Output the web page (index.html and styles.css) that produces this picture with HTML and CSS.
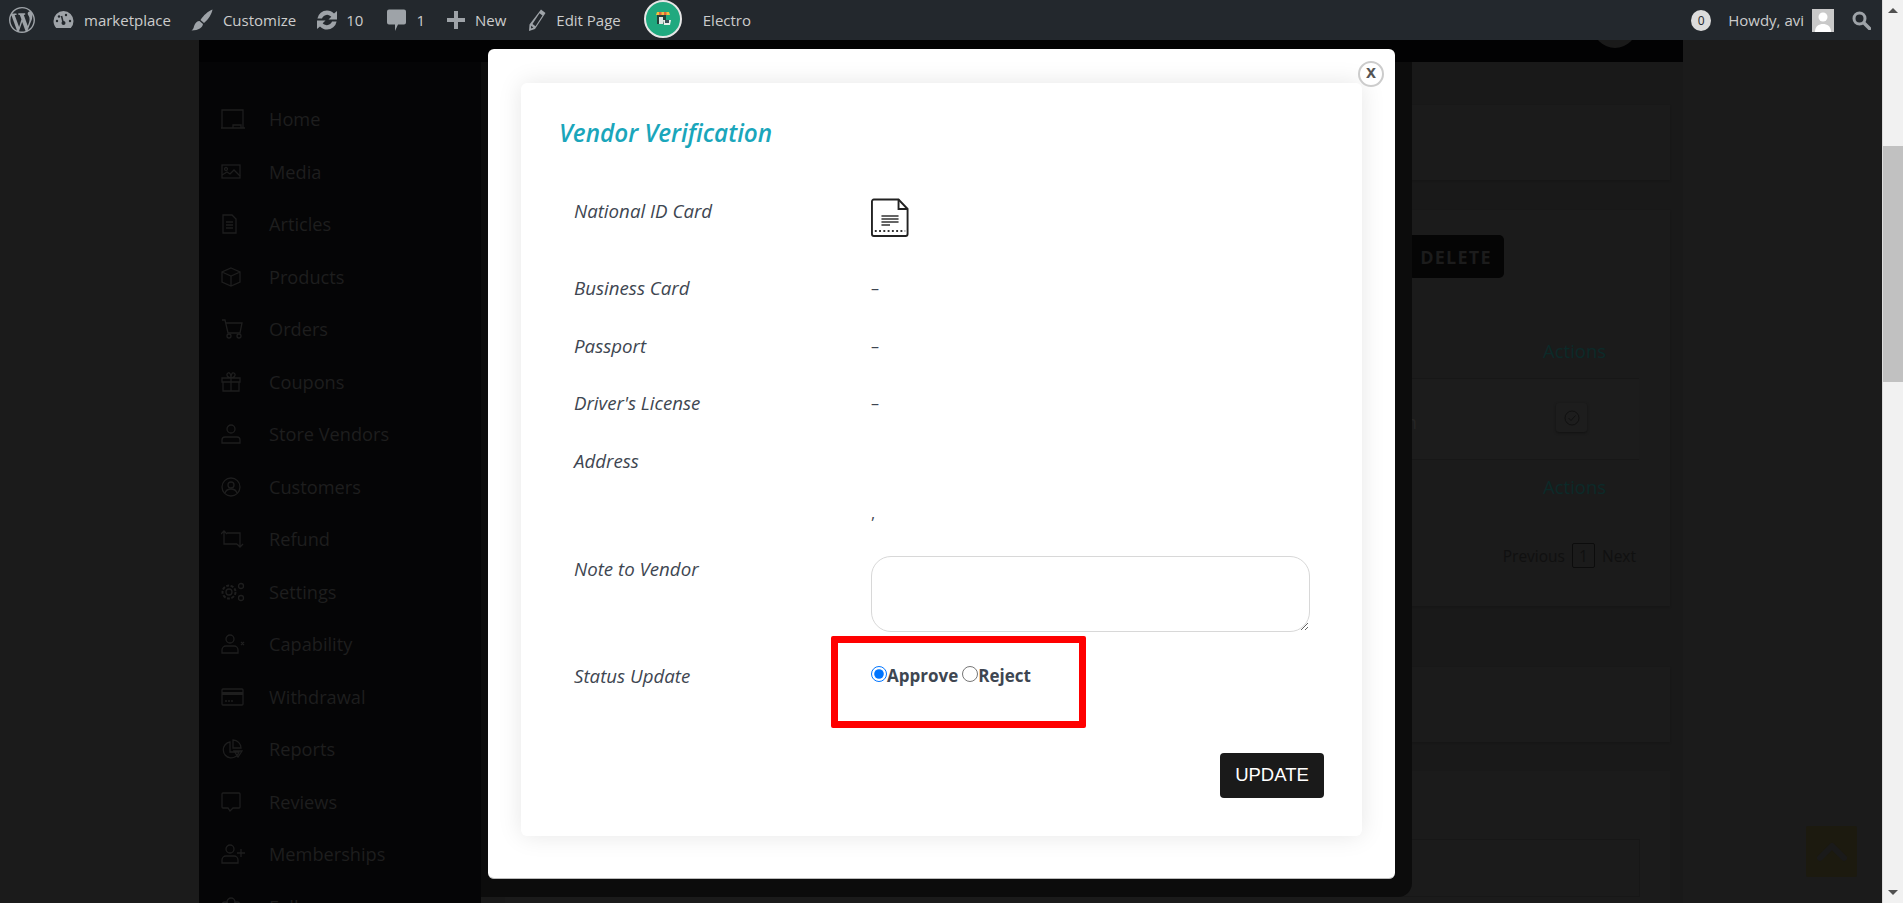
FILE: index.html
```html
<!DOCTYPE html>
<html lang="en">

<head>
    <meta charset="UTF-8">
    <meta name="viewport" content="width=device-width, initial-scale=1.0">
    <title>Vendor Verification</title>
    <link rel="stylesheet" href="styles.css">
</head>

<body>
    <div class="page">

        <div class="adminbar">
            <div class="ab-left">
                <svg class="ab-wp" viewBox="0 0 20 20"><path fill="#9ea3a8" d="M20 10c0-5.510-4.490-10-10-10C4.480 0 0 4.490 0 10c0 5.520 4.480 10 10 10 5.510 0 10-4.480 10-10zM7.780 15.370L4.370 6.220c.550-.020 1.170-.080 1.170-.080.500-.060.440-1.130-.060-1.110 0 0-1.450.110-2.370.110-.180 0-.370 0-.580-.010C4.120 2.690 6.890 1.050 10 1.050c2.330 0 4.450.870 6.030 2.340-.680-.110-1.650.390-1.650 1.580 0 .740.450 1.360.900 2.100.350.610.550 1.360.550 2.460 0 1.490-1.400 5-1.400 5l-3.030-8.370c.540-.020.820-.170.820-.170.500-.050.440-1.250-.060-1.220 0 0-1.440.120-2.380.120-.870 0-2.330-.120-2.330-.120-.500-.030-.560 1.200-.060 1.220l.920.080 1.260 3.410zM17.410 10c.240-.640.740-1.870.430-4.250.700 1.290 1.050 2.710 1.050 4.250 0 3.290-1.730 6.240-4.490 7.730 1-2.680 2-5.390 3.010-7.730zM6.100 18.090C3.120 16.640 1.110 13.530 1.110 10c0-1.300.230-2.480.720-3.590C3.250 10.300 4.670 14.200 6.100 18.090zm4.030-6.630l2.580 6.980c-.860.290-1.740.450-2.710.450-.790 0-1.570-.110-2.290-.330.810-2.380 1.620-4.740 2.420-7.100z"/></svg>
                <div class="ab-item ab-first">
                    <svg class="ab-icon" viewBox="0 0 21 22"><path d="M10.500 2a10 10 0 0 0-10 10c0 2.600 1 5 2.700 7h14.600a10 10 0 0 0 2.700-7 10 10 0 0 0-10-10z" fill="#9ea3a8"/><circle cx="10.500" cy="14" r="2" fill="#23282d"/><path d="M10.300 14 8.500 7" stroke="#23282d" stroke-width="1.500"/><circle cx="4" cy="12" r="1.200" fill="#23282d"/><circle cx="6" cy="7.500" r="1.200" fill="#23282d"/><circle cx="13" cy="6" r="1.200" fill="#23282d"/><circle cx="17" cy="12" r="1.200" fill="#23282d"/></svg>
                    <span>marketplace</span>
                </div>
                <div class="ab-item">
                    <svg class="ab-icon" viewBox="0 0 22 22"><path d="M21.500 .5c-.5 4-4 10-8.500 13.500l-3.500-3C12.500 6.500 17 2 21.500 .5zM8.500 12l3.500 3c-.5 3.500-4 6.500-11.500 6.500 2.500-1.500 2-3.500 3-5.500s2.500-4 5-4z" fill="#9ea3a8"/></svg>
                    <span>Customize</span>
                </div>
                <div class="ab-item ab-updates">
                    <svg class="ab-icon" viewBox="0 0 24 22"><path d="M12 1.500a9.500 9.500 0 0 1 7 3.100L22 2v8.500h-8.500l2.800-2.800A5.500 5.500 0 0 0 7 9.500H2.400A9.700 9.700 0 0 1 12 1.500zM2 20v-8.500h8.500l-2.800 2.800A5.500 5.500 0 0 0 17 12.500h4.600A9.700 9.700 0 0 1 12 20.500a9.500 9.500 0 0 1-7-3.100z" fill="#9ea3a8"/></svg>
                    <span>10</span>
                </div>
                <div class="ab-item ab-comments">
                    <svg class="ab-icon" viewBox="0 0 19 22"><path d="M2 .5h15a2 2 0 0 1 2 2v11a2 2 0 0 1-2 2h-6l-3 6.500v-6.500H2a2 2 0 0 1-2-2v-11a2 2 0 0 1 2-2z" fill="#9ea3a8"/></svg>
                    <span>1</span>
                </div>
                <div class="ab-item ab-wide">
                    <svg class="ab-icon" viewBox="0 -2 18 22"><path d="M7 0h4v7h7v4h-7v7H7v-7H0V7h7z" fill="#9ea3a8"/></svg>
                    <span>New</span>
                </div>
                <div class="ab-item ab-wide">
                    <svg class="ab-icon" viewBox="0 0 18 22"><path fill-rule="evenodd" d="M13 .5l4.500 3.500L7 20l-6 2 .5-6.500zM4.500 15l3 2.300L14.500 6.500l-3-2.300zM3.200 16.800l-.2 2.700 2.400-.9z" fill="#9ea3a8"/></svg>
                    <span>Edit Page</span>
                </div>
                <div class="ab-store">
                    <svg viewBox="0 0 24 24" class="store-icon"><path d="M5 8l1-3h12l1 3z" fill="#f0c040"/><path d="M8 5h2.500v3H8zM13 5h2.500v3H13z" fill="#e2673f"/><rect x="6" y="8" width="9" height="9" fill="#24423a"/><rect x="8" y="10" width="4" height="7" fill="#dfe6e2"/><path d="M12 13h8l-1 5h-6z" fill="#e8eeea"/><path d="M14 13h4v3h-4z" fill="#3b4a55"/></svg>
                </div>
                <div class="ab-item ab-electro"><span>Electro</span></div>
            </div>
            <div class="ab-right">
                <span class="ab-badge">0</span>
                <span class="ab-howdy">Howdy, avi</span>
                <svg class="ab-avatar" viewBox="0 0 22 23"><rect width="22" height="23" fill="#c9c9c9"/><circle cx="11" cy="8" r="4.500" fill="#fff"/><path d="M3 23c0-6 4-8 8-8s8 2 8 8z" fill="#fff"/></svg>
                <svg class="ab-search" viewBox="0 0 19 19"><circle cx="7.500" cy="7.500" r="5.500" fill="none" stroke="#9ea3a8" stroke-width="3"/><path d="M12 12l5.500 5.500" stroke="#9ea3a8" stroke-width="3.500" stroke-linecap="round"/></svg>
            </div>
        </div>

        <div class="dashboard">
            <div class="topbar">
                <div class="topbar-avatar"></div>
            </div>
            <div class="dash-body">
                <ul class="sidemenu">
                    <li class="side-item"><svg viewBox="0 0 24 20"><path d="M1 19V1h21v18M0 19h24M12 19v-3h8v3"/></svg>Home</li>
                    <li class="side-item"><svg viewBox="0 0 24 20"><rect x="1" y="3" width="18" height="13"/><circle cx="5" cy="7" r="1.500"/><path d="M1 13l5-3 3 2 4-4 6 6"/></svg>Media</li>
                    <li class="side-item"><svg viewBox="0 0 24 20"><path d="M2 1h9l4 4v14H2zM5 8h7M5 11h7M5 14h7"/></svg>Articles</li>
                    <li class="side-item"><svg viewBox="0 0 24 20"><path d="M10 1l9 4v10l-9 4-9-4V5zM1 5l9 4 9-4M10 9v10"/></svg>Products</li>
                    <li class="side-item"><svg viewBox="0 0 24 20"><path d="M1 1h3l3 13h12l2-10H5"/><circle cx="8" cy="17" r="2"/><circle cx="18" cy="17" r="2"/></svg>Orders</li>
                    <li class="side-item"><svg viewBox="0 0 24 20"><path d="M1 6h18v4H1zM2 10h16v9H2zM10 6v13M10 6C6 6 5 2 7 1s3 2 3 5c0-3 1-6 3-5s1 5-3 5"/></svg>Coupons</li>
                    <li class="side-item"><svg viewBox="0 0 24 20"><circle cx="10" cy="5" r="4"/><path d="M1 19v-3a3 3 0 0 1 3-3h12a3 3 0 0 1 3 3v3z"/></svg>Store Vendors</li>
                    <li class="side-item"><svg viewBox="0 0 24 20"><circle cx="10" cy="10" r="9"/><circle cx="10" cy="8" r="3"/><path d="M4 16c1-3 3-4 6-4s5 1 6 4"/></svg>Customers</li>
                    <li class="side-item"><svg viewBox="0 0 24 20"><path d="M0 5l3-3 3 3M3 2v13h13M6 4h13v14M16 15l3 3 3-3"/></svg>Refund</li>
                    <li class="side-item"><svg viewBox="0 0 24 20"><circle cx="8" cy="10" r="3"/><circle cx="8" cy="10" r="6.500" stroke-dasharray="3 1.500" stroke-width="2"/><circle cx="20" cy="4" r="2.500"/><circle cx="20" cy="16" r="2.500"/></svg>Settings</li>
                    <li class="side-item"><svg viewBox="0 0 24 20"><circle cx="9" cy="5" r="4"/><path d="M1 19v-3a4 4 0 0 1 4-4h8a4 4 0 0 1 4 4v3zM20 8l3 3M23 8l-3 3"/></svg>Capability</li>
                    <li class="side-item"><svg viewBox="0 0 24 20"><rect x="1" y="2" width="21" height="16" rx="1"/><path d="M1 6.500h21" stroke-width="3"/><path d="M4 14h9" stroke-dasharray="2 1"/></svg>Withdrawal</li>
                    <li class="side-item"><svg viewBox="0 0 24 20"><path d="M9 3a8 8 0 1 0 9 10H9zM12 1a8 8 0 0 1 8 8h-8zM13 12h8l-4 6z"/></svg>Reports</li>
                    <li class="side-item"><svg viewBox="0 0 24 20"><path d="M2 1h16a1 1 0 0 1 1 1v13a1 1 0 0 1-1 1H12l-3 3-2-3H2a1 1 0 0 1-1-1V2a1 1 0 0 1 1-1z"/></svg>Reviews</li>
                    <li class="side-item"><svg viewBox="0 0 24 20"><circle cx="9" cy="5" r="4"/><path d="M1 19v-3a4 4 0 0 1 4-4h8a4 4 0 0 1 4 4v3zM20 5v8M16 9h8"/></svg>Memberships</li>
                    <li class="side-item"><svg viewBox="0 0 24 20"><circle cx="10" cy="5" r="4"/><circle cx="4" cy="8" r="3"/><circle cx="16" cy="8" r="3"/></svg>Followers</li>
                </ul>

                <div class="content">
                    <div class="card card-head"></div>
                    <div class="card card-table">
                        <div class="toolbar">
                            <span class="delete-btn">DELETE</span>
                        </div>
                        <div class="table-row table-head"><span class="col-actions">Actions</span></div>
                        <div class="table-row table-body"><span class="col-text">am</span><span class="col-actions"><span class="check-btn"><svg viewBox="0 0 16 16"><circle cx="8" cy="8" r="7"/><path d="M4.500 8l2.500 2.500 4.500-5"/></svg></span></span></div>
                        <div class="table-row table-foot"><span class="col-actions">Actions</span></div>
                        <div class="pager">Previous <span class="pager-num">1</span> Next</div>
                    </div>
                    <div class="card card-empty"></div>
                    <div class="card card-last">
                        <div class="card-inner"></div>
                    </div>
                </div>
            </div>
        </div>

        <div class="back-top">
            <svg viewBox="0 0 30 20"><path d="M3 16 15 4l12 12" fill="none" stroke="#1a1a1a" stroke-width="6" stroke-linecap="round" stroke-linejoin="round"/></svg>
        </div>

        <div class="modal-backing"></div>
        <div class="modal">
            <span class="modal-close">x</span>
            <div class="modal-card">
                <h2 class="modal-title">Vendor Verification</h2>

                <div class="v-row v-row-first">
                    <div class="v-label">National ID Card</div>
                    <div class="v-value">
                        <svg class="file-icon" viewBox="0 0 40 40" preserveAspectRatio="none"><path d="M3 1.500h26l9.500 9.500v25a2 2 0 0 1-2 2H3a2 2 0 0 1-2-2V3.500a2 2 0 0 1 2-2z" fill="#fff" stroke="#222" stroke-width="2"/><path d="M29 1.500V11h9.500" fill="none" stroke="#222" stroke-width="2"/><path d="M11 18h18M11 21h18M11 24h18M11 27h9" stroke="#333" stroke-width="1.500"/><path d="M4 33h32" stroke="#333" stroke-width="2" stroke-dasharray="2 2.500"/></svg>
                    </div>
                </div>
                <div class="v-row"><div class="v-label">Business Card</div><div class="v-value">–</div></div>
                <div class="v-row"><div class="v-label">Passport</div><div class="v-value">–</div></div>
                <div class="v-row"><div class="v-label">Driver's License</div><div class="v-value">–</div></div>
                <div class="v-row v-row-address"><div class="v-label">Address</div></div>
                <div class="v-row v-row-comma"><div class="v-label"></div><div class="v-value">,</div></div>
                <div class="v-row v-row-note">
                    <div class="v-label">Note to Vendor</div>
                    <textarea class="v-note"></textarea>
                </div>
                <div class="v-row v-row-status">
                    <div class="v-label">Status Update</div>
                    <div class="v-radios">
                        <input type="radio" name="status" checked><span class="radio-text">Approve</span>
                        <input type="radio" name="status" class="radio-second"><span class="radio-text">Reject</span>
                    </div>
                </div>
                <div class="modal-actions">
                    <button class="update-btn">UPDATE</button>
                </div>
            </div>
        </div>
        <div class="highlight"></div>

    </div>

    <div class="scrollbar">
        <span class="sb-arrow sb-up"></span>
        <div class="sb-track"><div class="sb-thumb"></div></div>
        <span class="sb-arrow sb-down"></span>
    </div>
</body>

</html>
```

FILE: styles.css
```css
* {
    margin: 0;
    padding: 0;
    box-sizing: border-box;
}

body {
    font-family: "Open Sans", "Liberation Sans", sans-serif;
    background-color: #1b1b1b;
    display: flex;
    height: 100vh;
    overflow: hidden;
}

.page {
    flex: 1;
    display: flex;
    flex-direction: column;
    position: relative;
    overflow: hidden;
    min-width: 0;
}

/* admin bar */
.adminbar {
    height: 40px;
    flex-shrink: 0;
    background-color: #23282d;
    display: flex;
    justify-content: space-between;
    align-items: center;
    padding: 0 11px 0 9px;
    color: #ccc;
    font-size: 15px;
}

.ab-left {
    display: flex;
    align-items: center;
    gap: 20px;
}

.ab-wp {
    width: 26px;
    height: 26px;
}

.ab-first {
    margin-left: -2px;
}

.ab-item {
    display: flex;
    align-items: center;
    gap: 10px;
}

.ab-icon {
    height: 22px;
    width: auto;
    display: block;
}

.ab-updates {
    margin-left: -1px;
    gap: 7px;
}

.ab-comments {
    margin-left: 4px;
}

.ab-wide {
    margin-left: 2px;
}

.ab-store {
    width: 38px;
    height: 38px;
    border-radius: 50%;
    background-color: #20a97f;
    border: 2px solid #e6e6e6;
    display: flex;
    align-items: center;
    justify-content: center;
    margin: -2px 0 0 3px;
}

.ab-electro {
    margin-left: 1px;
}

.store-icon {
    width: 24px;
    height: 24px;
}

.ab-right {
    display: flex;
    align-items: center;
}

.ab-badge {
    width: 20px;
    height: 21px;
    border-radius: 50%;
    background-color: #dcdcdc;
    color: #23282d;
    font-size: 12px;
    display: flex;
    align-items: center;
    justify-content: center;
    margin-right: 17px;
}

.ab-howdy {
    margin-right: 8px;
}

.ab-avatar {
    width: 22px;
    height: 23px;
    margin-right: 18px;
}

.ab-search {
    width: 19px;
    height: 19px;
}

/* page behind the modal */
.dashboard {
    flex: 1;
    min-height: 0;
    margin-left: 199px;
    width: 1484px;
    display: flex;
    flex-direction: column;
}

.topbar {
    height: 22px;
    flex-shrink: 0;
    background-color: #020203;
    display: flex;
    justify-content: flex-end;
    padding-right: 46px;
    overflow: hidden;
}

.topbar-avatar {
    width: 44px;
    height: 44px;
    flex-shrink: 0;
    margin-top: -36px;
    background-color: #1a1a1a;
    border-radius: 50%;
}

.dash-body {
    flex: 1;
    display: flex;
    min-height: 0;
}

.sidemenu {
    width: 282px;
    flex-shrink: 0;
    background-color: #050506;
    list-style: none;
    padding: 31px 0 0 22px;
    overflow: hidden;
}

.side-item {
    height: 52.500px;
    display: flex;
    align-items: center;
    gap: 24px;
    font-size: 18.200px;
    color: #1e1e1e;
}

.side-item svg {
    width: 24px;
    height: 20px;
    fill: none;
    stroke: #1e1e1e;
    stroke-width: 1.300;
}

.content {
    flex: 1;
    padding: 0 13px 0 24px;
    background-color: #191919;
}

.card {
    background-color: #1b1b1b;
    box-shadow: 0 1px 2px rgba(0, 0, 0, 0.15);
}

.card-head {
    height: 75px;
    margin-top: 43px;
}

.card-table {
    height: 396px;
    margin-top: 30px;
    padding: 25px 31px 0 0;
    color: #232323;
    font-size: 18px;
}

.toolbar {
    display: flex;
    justify-content: flex-end;
    padding-right: 135px;
}

.delete-btn {
    width: 96px;
    height: 43px;
    background-color: #050505;
    border-radius: 5px;
    color: #1c1c1c;
    font-size: 18px;
    font-weight: bold;
    letter-spacing: 1.200px;
    display: flex;
    align-items: center;
    justify-content: center;
}

.table-row {
    display: flex;
    justify-content: flex-end;
    align-items: center;
}

.table-head {
    height: 54px;
    margin-top: 45px;
}

.table-body {
    height: 82px;
    margin-top: 1px;
    background-color: #1c1c1c;
    border-top: 1px solid #171717;
    border-bottom: 1px solid #171717;
}

.table-foot {
    height: 53px;
}

.col-text {
    color: #262626;
    margin: 6px 126px 0 0;
}

.col-actions {
    width: 96px;
    color: #0c2a29;
    font-size: 18.500px;
}

.check-btn {
    width: 31px;
    height: 29px;
    border-radius: 3px;
    background-color: #1d1d1d;
    box-shadow: 0 1px 3px rgba(0, 0, 0, 0.4);
    display: flex;
    align-items: center;
    justify-content: center;
    margin: -3px 0 0 13px;
}

.check-btn svg {
    width: 16px;
    height: 16px;
    fill: none;
    stroke: #101010;
    stroke-width: 1;
}

.pager {
    display: flex;
    justify-content: flex-end;
    align-items: center;
    gap: 7px;
    margin: 30px 3px 0 0;
    font-size: 15.500px;
    color: #101010;
}

.pager-num {
    width: 23px;
    height: 25px;
    border: 1px solid #0c0c0c;
    border-radius: 2px;
    display: flex;
    align-items: center;
    justify-content: center;
}

.card-empty {
    height: 75px;
    margin-top: 61px;
}

.card-last {
    height: 160px;
    margin-top: 29px;
    padding-top: 68px;
    box-shadow: none;
}

.card-inner {
    height: 58px;
    margin-right: 30px;
    border: 1px solid #171717;
}

.back-top {
    position: absolute;
    left: 1806px;
    top: 826px;
    width: 51px;
    height: 51px;
    background-color: #1c1a0f;
    border-radius: 2px;
    display: flex;
    align-items: center;
    justify-content: center;
}

.back-top svg {
    width: 30px;
    height: 20px;
}

/* modal */
.modal-backing {
    position: absolute;
    left: 481px;
    top: 62px;
    width: 931px;
    height: 835px;
    background-color: #0c0c0c;
    border-radius: 0 0 14px 0;
}

.modal {
    position: absolute;
    left: 488px;
    top: 49px;
    width: 907px;
    height: 830px;
    background-color: #fff;
    border-radius: 6px;
    border-bottom: 1px solid #bbb;
    padding: 34px 33px 0;
}

.modal-close {
    position: absolute;
    left: 870px;
    top: 12px;
    width: 26px;
    height: 26px;
    background-color: #fff;
    border: 2px solid #ccc;
    border-radius: 50%;
    color: #555;
    font-family: "Liberation Sans", sans-serif;
    font-size: 18px;
    font-weight: bold;
    line-height: 19px;
    text-align: center;
}

.modal-card {
    height: 753px;
    background-color: #fff;
    border-radius: 6px;
    box-shadow: 0 0 24px rgba(0, 0, 0, 0.1);
    padding: 32px 38px 0;
}

.modal-title {
    font-size: 24.300px;
    font-style: italic;
    font-weight: 600;
    color: #1aa6bb;
    line-height: 36px;
}

.v-row {
    display: flex;
    height: 57.500px;
    padding-left: 15px;
    color: #3e4651;
    font-size: 16px;
    line-height: 24px;
}

.v-row-first {
    margin-top: 48px;
    height: 77px;
}

.v-label {
    width: 297px;
    font-size: 18.700px;
    font-style: italic;
    flex-shrink: 0;
}

.file-icon {
    width: 38px;
    height: 40px;
    display: block;
    margin-top: -1px;
}

.v-row-address {
    height: 52px;
}

.v-row-comma {
    height: 56px;
}

.v-row-note {
    height: 107px;
}

.v-note {
    width: 439px;
    height: 76px;
    border: 1px solid #d8d8d8;
    border-radius: 20px;
    outline: none;
    margin-top: -1px;
    background-color: #fff;
}

.v-row-status {
    height: 89px;
}

.v-radios {
    display: flex;
    align-items: flex-start;
    font-size: 17px;
    font-weight: bold;
}

.v-radios input {
    width: 16px;
    height: 16px;
    margin-top: 2px;
}

.radio-second {
    margin-left: 4px;
}

.modal-actions {
    display: flex;
    justify-content: flex-end;
}

.update-btn {
    width: 104px;
    height: 45px;
    background-color: #1a1a1a;
    color: #fff;
    border: none;
    border-radius: 4px;
    font-family: "Liberation Sans", sans-serif;
    font-size: 18.500px;
}

.highlight {
    position: absolute;
    left: 831px;
    top: 636px;
    width: 255px;
    height: 92px;
    border: 7px solid #ff0000;
    border-radius: 2px;
}

/* scrollbar */
.scrollbar {
    width: 21px;
    flex-shrink: 0;
    background-color: #f1f1f1;
    display: flex;
    flex-direction: column;
    align-items: center;
    border-left: 1px solid #ddd;
}

.sb-arrow {
    flex-shrink: 0;
    width: 0;
    height: 5px;
    margin: 8px 0;
    border-left: 5px solid transparent;
    border-right: 5px solid transparent;
}

.sb-up {
    border-bottom: 5px solid #505050;
}

.sb-down {
    border-top: 5px solid #505050;
}

.sb-track {
    flex: 1;
    width: 100%;
    padding-top: 125px;
}

.sb-thumb {
    width: 100%;
    height: 236px;
    background-color: #c1c1c1;
}
```
